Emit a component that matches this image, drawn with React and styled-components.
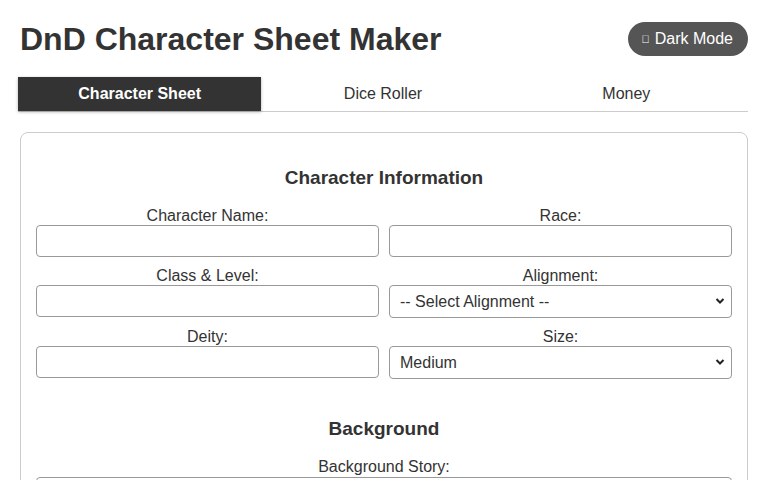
import React from "react";
import styled, { createGlobalStyle } from "styled-components";

const FONT = `Arial, "Liberation Sans", Helvetica, sans-serif`;

const Global = createGlobalStyle`
  html, body { margin: 0; padding: 0; background: #fff; }
  body { font-family: ${FONT}; color: #333; }
  * { box-sizing: border-box; }
`;

const Page = styled.div`
  padding: 0 20px;
`;

const Header = styled.header`
  display: flex;
  justify-content: space-between;
  align-items: center;
  height: 77px;
  padding-top: 1px;
`;

const Title = styled.h1`
  margin: 0;
  font-family: ${FONT};
  font-size: 32px;
  font-weight: bold;
  color: #333;
`;

const ModeButton = styled.button`
  display: flex;
  align-items: center;
  gap: 5px;
  background: #555;
  color: #fff;
  border: none;
  border-radius: 17px;
  height: 34px;
  padding: 0 15px 0 14px;
  font-family: ${FONT};
  font-size: 16px;
`;

const Icon = styled.span`
  font-size: 11px;
  line-height: 1;
`;

const Tabs = styled.nav`
  display: grid;
  grid-template-columns: repeat(3, 1fr);
  margin: 0 0 0 -2px;
  border-bottom: 1px solid #ccc;
`;

const Tab = styled.div`
  height: 34px;
  display: flex;
  align-items: center;
  justify-content: center;
  font-size: 16px;
  background: ${(p) => (p.$active ? "#333" : "transparent")};
  color: ${(p) => (p.$active ? "#fff" : "#333")};
  font-weight: ${(p) => (p.$active ? "bold" : "normal")};
  box-shadow: ${(p) => (p.$active ? "0 1px 3px rgba(0,0,0,0.3)" : "none")};
`;

const Card = styled.section`
  margin-top: 20px;
  border: 1px solid #ccc;
  border-radius: 8px;
  padding: 24px 15px 0;
`;

const SectionTitle = styled.h2`
  margin: 10px 0 18px;
  text-align: center;
  font-family: ${FONT};
  font-size: 19px;
  font-weight: bold;
  color: #333;
  line-height: 22px;
`;

const Grid = styled.div`
  display: grid;
  grid-template-columns: 1fr 1fr;
  column-gap: 10px;
  row-gap: 10px;
`;

const Field = styled.div`
  display: flex;
  flex-direction: column;
  align-items: stretch;
`;

const Label = styled.label`
  text-align: center;
  font-size: 16px;
  line-height: 18px;
  color: #333;
`;

const Input = styled.input`
  height: 32px;
  border: 1px solid #999;
  border-radius: 4px;
  font-family: ${FONT};
  font-size: 16px;
  padding: 0 10px;
  background: #fff;
`;

const SelectWrap = styled.div`
  position: relative;
`;

const Select = styled.select`
  width: 100%;
  height: 33px;
  border: 1px solid #999;
  border-radius: 4px;
  font-family: ${FONT};
  font-size: 16px;
  color: #333;
  padding: 0 10px;
  background: #fff;
  appearance: none;
`;

const Chevron = styled.svg`
  position: absolute;
  right: 7px;
  top: 12px;
  pointer-events: none;
`;

const Spacer = styled.div`
  height: 29px;
`;

const TextArea = styled.textarea`
  width: 100%;
  height: 80px;
  border: 1px solid #999;
  border-radius: 4px;
  margin-top: 1px;
  display: block;
`;

const Single = styled.div`
  display: flex;
  flex-direction: column;
`;

function Sel({ children }) {
  return (
    <SelectWrap>
      <Select>{children}</Select>
      <Chevron width="10" height="8" viewBox="0 0 10 8">
        <path d="M1.5 2 L5 5.5 L8.5 2" fill="none" stroke="#222" strokeWidth="2" />
      </Chevron>
    </SelectWrap>
  );
}

export default function App() {
  return (
    <>
      <Global />
      <Page>
        <Header>
          <Title>DnD Character Sheet Maker</Title>
          <ModeButton>
            <Icon>{"\uF186"}</Icon>
            <span>Dark Mode</span>
          </ModeButton>
        </Header>
        <Tabs>
          <Tab $active>Character Sheet</Tab>
          <Tab>Dice Roller</Tab>
          <Tab>Money</Tab>
        </Tabs>
        <Card>
          <SectionTitle>Character Information</SectionTitle>
          <Grid>
            <Field>
              <Label>Character Name:</Label>
              <Input />
            </Field>
            <Field>
              <Label>Race:</Label>
              <Input />
            </Field>
            <Field>
              <Label>Class &amp; Level:</Label>
              <Input />
            </Field>
            <Field>
              <Label>Alignment:</Label>
              <Sel>
                <option>-- Select Alignment --</option>
              </Sel>
            </Field>
            <Field>
              <Label>Deity:</Label>
              <Input />
            </Field>
            <Field>
              <Label>Size:</Label>
              <Sel>
                <option>Medium</option>
              </Sel>
            </Field>
          </Grid>
          <Spacer />
          <SectionTitle>Background</SectionTitle>
          <Single>
            <Label>Background Story:</Label>
            <TextArea />
          </Single>
        </Card>
      </Page>
    </>
  );
}
